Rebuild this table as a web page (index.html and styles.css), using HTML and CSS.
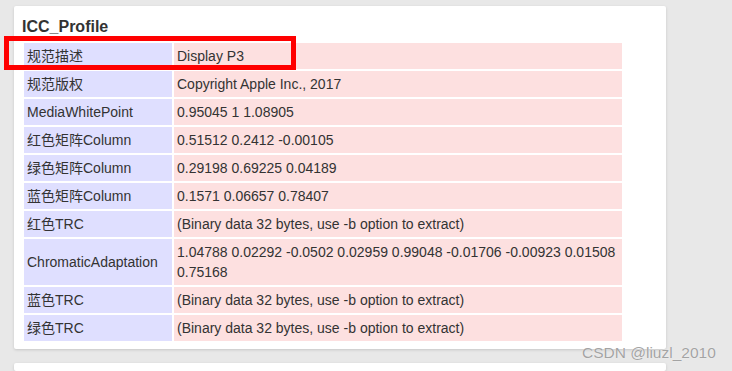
FILE: index.html
```html
<!DOCTYPE html>
<html lang="zh-CN">
<head>
    <meta charset="UTF-8">
    <meta name="viewport" content="width=device-width, initial-scale=1.0">
    <title>ICC_Profile</title>
    <link rel="stylesheet" href="styles.css">
</head>
<body>
    <div class="panel">
        <h3 class="panel-title">ICC_Profile</h3>
        <table class="tag-table">
            <tr><td class="key">规范描述</td><td class="val">Display P3</td></tr>
            <tr><td class="key">规范版权</td><td class="val">Copyright Apple Inc., 2017</td></tr>
            <tr><td class="key">MediaWhitePoint</td><td class="val">0.95045 1 1.08905</td></tr>
            <tr><td class="key">红色矩阵Column</td><td class="val">0.51512 0.2412 -0.00105</td></tr>
            <tr><td class="key">绿色矩阵Column</td><td class="val">0.29198 0.69225 0.04189</td></tr>
            <tr><td class="key">蓝色矩阵Column</td><td class="val">0.1571 0.06657 0.78407</td></tr>
            <tr><td class="key">红色TRC</td><td class="val">(Binary data 32 bytes, use -b option to extract)</td></tr>
            <tr><td class="key">ChromaticAdaptation</td><td class="val">1.04788 0.02292 -0.0502 0.02959 0.99048 -0.01706 -0.00923 0.01508 0.75168</td></tr>
            <tr><td class="key">蓝色TRC</td><td class="val">(Binary data 32 bytes, use -b option to extract)</td></tr>
            <tr><td class="key">绿色TRC</td><td class="val">(Binary data 32 bytes, use -b option to extract)</td></tr>
        </table>
    </div>
    <div class="panel panel-next"></div>

    <!-- 标注框 -->
    <div class="mark"></div>
    <div class="watermark">CSDN @liuzl_2010</div>
</body>
</html>
```

FILE: styles.css
```css
html {
    overflow: hidden;
}

body {
    font-family: 'Liberation Sans', Arial, 'Noto Sans CJK SC', sans-serif;
    font-size: 14px;
    line-height: 20px;
    color: #333;
    margin: 0;
    padding: 6px 0 0 14px;
    background: #e8e8e8;
    height: 371px;
    box-sizing: border-box;
    overflow: hidden;
}

.panel {
    width: 652px;
    box-sizing: border-box;
    background: #fff;
    padding: 11px 8px 6px;
    border-radius: 2px;
    box-shadow: 0 1px 3px rgba(0,0,0,0.15);
}

.panel-next {
    margin-top: 14px;
    height: 8px;
    padding: 0;
}

.panel-title {
    margin: 0 0 4px;
    font-size: 16px;
    font-weight: bold;
    line-height: 20px;
    color: #333;
}

.tag-table {
    width: 602px;
    border-spacing: 2px;
    border-collapse: separate;
}

.tag-table td {
    padding: 3px 3px;
    vertical-align: middle;
}

.key {
    width: 142px;
    background: #dfdfff;
}

.val {
    background: #fde0e0;
}

.mark {
    position: absolute;
    left: 4px;
    top: 36px;
    width: 292px;
    height: 34px;
    box-sizing: border-box;
    border: 5px solid #f00;
}

.watermark {
    position: absolute;
    left: 582px;
    top: 343px;
    font-size: 15.5px;
    color: #a3a3a3;
    text-shadow: 0 0 1px #fff;
}
```
